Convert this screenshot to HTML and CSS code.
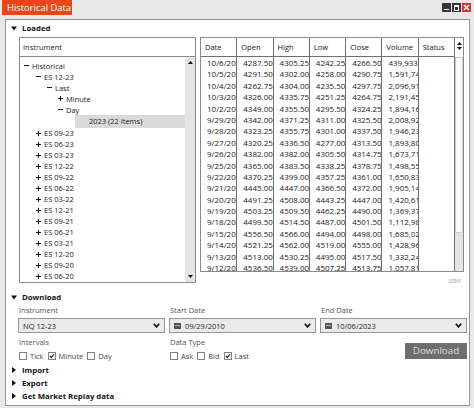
FILE: index.html
```html
<!DOCTYPE html>
<html>
<head>
<meta charset="utf-8">
<link rel="stylesheet" href="styles.css">
</head>
<body>

<div class="titleBar">
  <div class="titleTab">Historical Data</div>
  <div class="winButtons">
    <span class="winBtn minBtn"><span class="minBar"></span></span>
    <span class="winBtn maxBtn"><span class="maxBox"></span></span>
    <span class="winBtn closeBtn">
      <svg width="9" height="9" viewBox="0 0 9 9"><path d="M2 2 L7 7 M7 2 L2 7" stroke="#fff" stroke-width="1.6"/></svg>
    </span>
  </div>
</div>

<div class="panel">

  <div class="sectionHead">
    <svg class="arrowDown" width="6" height="5" viewBox="0 0 6 5"><polygon points="0,0.5 6,0.5 3,4.5" fill="#111"/></svg>
    Loaded
  </div>

  <div class="loadedBody">

    <div class="instrumentBox">
      <div class="boxHeader">Instrument</div>
      <div class="treeArea">
        <div class="tree">
          <div class="treeRow" style="padding-left:4px"><span class="exp minus"></span>Historical</div>
          <div class="treeRow" style="padding-left:16px"><span class="exp minus"></span>ES 12-23</div>
          <div class="treeRow" style="padding-left:27px"><span class="exp minus"></span>Last</div>
          <div class="treeRow" style="padding-left:38px"><span class="exp plus"></span>Minute</div>
          <div class="treeRow" style="padding-left:38px"><span class="exp minus"></span>Day</div>
          <div class="treeRow selRow">2023 (22 items)</div>
          <div class="treeRow" style="padding-left:16px"><span class="exp plus"></span>ES 09-23</div>
          <div class="treeRow" style="padding-left:16px"><span class="exp plus"></span>ES 06-23</div>
          <div class="treeRow" style="padding-left:16px"><span class="exp plus"></span>ES 03-23</div>
          <div class="treeRow" style="padding-left:16px"><span class="exp plus"></span>ES 12-22</div>
          <div class="treeRow" style="padding-left:16px"><span class="exp plus"></span>ES 09-22</div>
          <div class="treeRow" style="padding-left:16px"><span class="exp plus"></span>ES 06-22</div>
          <div class="treeRow" style="padding-left:16px"><span class="exp plus"></span>ES 03-22</div>
          <div class="treeRow" style="padding-left:16px"><span class="exp plus"></span>ES 12-21</div>
          <div class="treeRow" style="padding-left:16px"><span class="exp plus"></span>ES 09-21</div>
          <div class="treeRow" style="padding-left:16px"><span class="exp plus"></span>ES 06-21</div>
          <div class="treeRow" style="padding-left:16px"><span class="exp plus"></span>ES 03-21</div>
          <div class="treeRow" style="padding-left:16px"><span class="exp plus"></span>ES 12-20</div>
          <div class="treeRow" style="padding-left:16px"><span class="exp plus"></span>ES 09-20</div>
          <div class="treeRow" style="padding-left:16px"><span class="exp plus"></span>ES 06-20</div>
        </div>
        <div class="treeScroll">
          <svg width="5" height="3" viewBox="0 0 5 3"><polygon points="0,3 5,3 2.5,0" fill="#111"/></svg>
          <div class="treeThumb"></div>
          <svg width="5" height="3" viewBox="0 0 5 3"><polygon points="0,0 5,0 2.5,3" fill="#111"/></svg>
        </div>
      </div>
    </div>

    <div class="gridWrap">
      <div class="grid">
        <div class="gridMain">
          <div class="gridHead">
            <div class="hcell">Date</div>
            <div class="hcell">Open</div>
            <div class="hcell">High</div>
            <div class="hcell">Low</div>
            <div class="hcell">Close</div>
            <div class="hcell">Volume</div>
            <div class="hcell">Status</div>
          </div>
          <div class="gridBody">
            <div class="gridRow"><div class="cell">10/6/2023</div><div class="cell">4287.50</div><div class="cell">4305.25</div><div class="cell">4242.25</div><div class="cell">4266.50</div><div class="cell">439,933</div><div class="cell"></div></div>
            <div class="gridRow"><div class="cell">10/5/2023</div><div class="cell">4291.50</div><div class="cell">4302.00</div><div class="cell">4258.00</div><div class="cell">4290.75</div><div class="cell">1,591,742</div><div class="cell"></div></div>
            <div class="gridRow"><div class="cell">10/4/2023</div><div class="cell">4262.75</div><div class="cell">4304.00</div><div class="cell">4235.50</div><div class="cell">4297.75</div><div class="cell">2,096,918</div><div class="cell"></div></div>
            <div class="gridRow"><div class="cell">10/3/2023</div><div class="cell">4326.00</div><div class="cell">4335.75</div><div class="cell">4251.25</div><div class="cell">4264.75</div><div class="cell">2,191,455</div><div class="cell"></div></div>
            <div class="gridRow"><div class="cell">10/2/2023</div><div class="cell">4349.00</div><div class="cell">4355.50</div><div class="cell">4295.50</div><div class="cell">4324.25</div><div class="cell">1,894,163</div><div class="cell"></div></div>
            <div class="gridRow"><div class="cell">9/29/2023</div><div class="cell">4342.00</div><div class="cell">4371.25</div><div class="cell">4311.00</div><div class="cell">4325.50</div><div class="cell">2,008,926</div><div class="cell"></div></div>
            <div class="gridRow"><div class="cell">9/28/2023</div><div class="cell">4323.25</div><div class="cell">4355.75</div><div class="cell">4301.00</div><div class="cell">4337.50</div><div class="cell">1,946,231</div><div class="cell"></div></div>
            <div class="gridRow"><div class="cell">9/27/2023</div><div class="cell">4320.25</div><div class="cell">4336.50</div><div class="cell">4277.00</div><div class="cell">4313.50</div><div class="cell">1,893,804</div><div class="cell"></div></div>
            <div class="gridRow"><div class="cell">9/26/2023</div><div class="cell">4382.00</div><div class="cell">4382.00</div><div class="cell">4305.50</div><div class="cell">4314.75</div><div class="cell">1,673,719</div><div class="cell"></div></div>
            <div class="gridRow"><div class="cell">9/25/2023</div><div class="cell">4365.00</div><div class="cell">4383.50</div><div class="cell">4338.25</div><div class="cell">4378.75</div><div class="cell">1,498,556</div><div class="cell"></div></div>
            <div class="gridRow"><div class="cell">9/22/2023</div><div class="cell">4370.25</div><div class="cell">4399.00</div><div class="cell">4357.25</div><div class="cell">4361.00</div><div class="cell">1,650,837</div><div class="cell"></div></div>
            <div class="gridRow"><div class="cell">9/21/2023</div><div class="cell">4445.00</div><div class="cell">4447.00</div><div class="cell">4366.50</div><div class="cell">4372.00</div><div class="cell">1,905,142</div><div class="cell"></div></div>
            <div class="gridRow"><div class="cell">9/20/2023</div><div class="cell">4491.25</div><div class="cell">4508.00</div><div class="cell">4443.25</div><div class="cell">4447.00</div><div class="cell">1,420,618</div><div class="cell"></div></div>
            <div class="gridRow"><div class="cell">9/19/2023</div><div class="cell">4503.25</div><div class="cell">4509.50</div><div class="cell">4462.25</div><div class="cell">4490.00</div><div class="cell">1,369,375</div><div class="cell"></div></div>
            <div class="gridRow"><div class="cell">9/18/2023</div><div class="cell">4499.50</div><div class="cell">4514.50</div><div class="cell">4487.00</div><div class="cell">4501.50</div><div class="cell">1,112,983</div><div class="cell"></div></div>
            <div class="gridRow"><div class="cell">9/15/2023</div><div class="cell">4556.50</div><div class="cell">4566.00</div><div class="cell">4494.00</div><div class="cell">4498.00</div><div class="cell">1,685,027</div><div class="cell"></div></div>
            <div class="gridRow"><div class="cell">9/14/2023</div><div class="cell">4521.25</div><div class="cell">4562.00</div><div class="cell">4519.00</div><div class="cell">4555.00</div><div class="cell">1,428,961</div><div class="cell"></div></div>
            <div class="gridRow"><div class="cell">9/13/2023</div><div class="cell">4513.00</div><div class="cell">4530.25</div><div class="cell">4495.00</div><div class="cell">4517.50</div><div class="cell">1,332,249</div><div class="cell"></div></div>
            <div class="gridRow"><div class="cell">9/12/2023</div><div class="cell">4536.50</div><div class="cell">4539.00</div><div class="cell">4507.25</div><div class="cell">4513.75</div><div class="cell">1,057,812</div><div class="cell"></div></div>
          </div>
        </div>
        <div class="gridScroll">
          <div class="sortArrows">
            <svg width="5" height="3" viewBox="0 0 5 3"><polygon points="0,3 5,3 2.5,0" fill="#111"/></svg>
            <svg width="5" height="3" viewBox="0 0 5 3"><polygon points="0,0 5,0 2.5,3" fill="#111"/></svg>
          </div>
          <div class="gridThumb"></div>
        </div>
      </div>
      <div class="saveLink">save</div>
    </div>

  </div>

  <div class="sectionHead downloadHead">
    <svg class="arrowDown" width="6" height="5" viewBox="0 0 6 5"><polygon points="0,0.5 6,0.5 3,4.5" fill="#111"/></svg>
    Download
  </div>

  <div class="downloadForm">
    <div class="label">Instrument</div>
    <div class="label">Start Date</div>
    <div class="label">End Date</div>

    <div class="combo">
      <span class="comboText">NQ 12-23</span>
      <svg class="chevron" width="7" height="5" viewBox="0 0 7 5"><polyline points="0.8,0.8 3.5,3.8 6.2,0.8" fill="none" stroke="#111" stroke-width="1.7"/></svg>
    </div>
    <div class="combo">
      <svg class="calIcon" width="7" height="6" viewBox="0 0 7 6"><rect x="0" y="0" width="7" height="6" fill="#555"/><rect x="1" y="2" width="5" height="0.8" fill="#ccc"/></svg>
      <span class="comboText">09/29/2010</span>
      <svg class="chevron" width="7" height="5" viewBox="0 0 7 5"><polyline points="0.8,0.8 3.5,3.8 6.2,0.8" fill="none" stroke="#111" stroke-width="1.7"/></svg>
    </div>
    <div class="combo">
      <svg class="calIcon" width="7" height="6" viewBox="0 0 7 6"><rect x="0" y="0" width="7" height="6" fill="#555"/><rect x="1" y="2" width="5" height="0.8" fill="#ccc"/></svg>
      <span class="comboText">10/06/2023</span>
      <svg class="chevron" width="7" height="5" viewBox="0 0 7 5"><polyline points="0.8,0.8 3.5,3.8 6.2,0.8" fill="none" stroke="#111" stroke-width="1.7"/></svg>
    </div>

    <div class="label spaced">Intervals</div>
    <div class="label spaced">Data Type</div>
    <div class="buttonCell"><div class="downloadBtn">Download</div></div>

    <div class="checkRow">
      <span class="checkBox"></span><span class="checkLabel">Tick</span>
      <span class="checkBox"><svg width="6" height="6" viewBox="0 0 6 6"><polyline points="0.8,3 2.3,4.6 5.2,1" fill="none" stroke="#222" stroke-width="1.1"/></svg></span><span class="checkLabel">Minute</span>
      <span class="checkBox"></span><span class="checkLabel">Day</span>
    </div>
    <div class="checkRow">
      <span class="checkBox"></span><span class="checkLabel">Ask</span>
      <span class="checkBox"></span><span class="checkLabel">Bid</span>
      <span class="checkBox"><svg width="6" height="6" viewBox="0 0 6 6"><polyline points="0.8,3 2.3,4.6 5.2,1" fill="none" stroke="#222" stroke-width="1.1"/></svg></span><span class="checkLabel">Last</span>
    </div>
  </div>

  <div class="sectionHead collapsed">
    <svg class="arrowRight" width="4" height="6" viewBox="0 0 4 6"><polygon points="0,0 4,3 0,6" fill="#111"/></svg>
    Import
  </div>
  <div class="sectionHead collapsed">
    <svg class="arrowRight" width="4" height="6" viewBox="0 0 4 6"><polygon points="0,0 4,3 0,6" fill="#111"/></svg>
    Export
  </div>
  <div class="sectionHead collapsed">
    <svg class="arrowRight" width="4" height="6" viewBox="0 0 4 6"><polygon points="0,0 4,3 0,6" fill="#111"/></svg>
    Get Market Replay data
  </div>

</div>

</body>
</html>
```

FILE: styles.css
```css
body {
  margin: 0;
  width: 474px;
  height: 408px;
  overflow: hidden;
  background-color: rgb(232, 232, 232);
  font-family: "Open Sans", "Noto Sans", sans-serif;
  font-size: 7.5px;
  color: rgb(34, 34, 34);
}

/* title bar */

.titleBar {
  display: flex;
  justify-content: space-between;
  height: 19px;
}

.titleTab {
  margin-left: 2px;
  width: 65px;
  height: 15px;
  padding-left: 5px;
  background-color: rgb(230, 70, 25);
  color: white;
  font-size: 9.4px;
  line-height: 15px;
}

.winButtons {
  display: flex;
  gap: 1px;
  padding-top: 3px;
  padding-right: 3px;
}

.winBtn {
  position: relative;
  width: 9px;
  height: 9px;
  background-color: rgb(52, 52, 52);
}

.minBar {
  position: absolute;
  left: 2px;
  bottom: 2px;
  width: 5px;
  height: 1px;
  background: white;
}

.maxBox {
  position: absolute;
  left: 2px;
  top: 2px;
  width: 3px;
  height: 3px;
  border: 1px solid white;
  border-top-width: 2px;
}

.closeBtn {
  background-color: rgb(214, 48, 40);
}

.closeBtn svg {
  display: block;
}

/* main panel */

.panel {
  margin: 0 4px 0 5px;
  height: 385px;
  border: 1px solid rgb(150, 150, 150);
  background: white;
}

.sectionHead {
  display: flex;
  align-items: center;
  height: 14px;
  margin-top: 1px;
  padding-left: 5px;
  font-weight: bold;
  font-size: 7.8px;
  color: rgb(20, 20, 20);
}

.arrowDown {
  margin-right: 5px;
}

.arrowRight {
  margin-left: 1px;
  margin-right: 6px;
}

.collapsed {
  height: 13px;
  margin-top: 0;
}

.downloadHead {
  margin-top: 7px;
}

.loadedBody {
  display: flex;
  gap: 4px;
  height: 246px;
  margin-top: 2px;
  margin-left: 13px;
}

/* instrument tree */

.instrumentBox {
  display: flex;
  flex-direction: column;
  width: 177px;
  box-sizing: border-box;
  border: 1px solid rgb(138, 138, 138);
}

.boxHeader {
  height: 18px;
  line-height: 18px;
  padding-left: 3px;
  border-bottom: 1px solid rgb(138, 138, 138);
}

.treeArea {
  display: flex;
  flex: 1;
  overflow: hidden;
}

.tree {
  flex: 1;
  padding-top: 3px;
  overflow: hidden;
}

.treeRow {
  display: flex;
  align-items: center;
  height: 11px;
  white-space: nowrap;
}

.exp {
  position: relative;
  width: 8px;
  height: 5px;
  flex-shrink: 0;
}

.exp::before {
  content: "";
  position: absolute;
  left: 0;
  top: 2px;
  width: 5px;
  height: 1.3px;
  background: rgb(20, 20, 20);
}

.plus::after {
  content: "";
  position: absolute;
  left: 1.9px;
  top: 0;
  width: 1.3px;
  height: 5px;
  background: rgb(20, 20, 20);
}

.selRow {
  height: 12.5px;
  margin-left: 55px;
  padding-left: 14px;
  background-color: rgb(218, 218, 218);
}

.treeScroll {
  display: flex;
  flex-direction: column;
  align-items: center;
  justify-content: space-between;
  width: 10px;
  padding: 4px 0;
  box-sizing: border-box;
  background-color: rgb(228, 228, 228);
}

.treeThumb {
  flex: 1;
}

/* data grid */

.gridWrap {
  display: flex;
  flex-direction: column;
  width: 264px;
}

.grid {
  display: flex;
  height: 235px;
  box-sizing: border-box;
  border: 1px solid rgb(138, 138, 138);
}

.gridMain {
  display: flex;
  flex-direction: column;
  width: 254px;
}

.gridHead {
  display: flex;
  height: 18px;
  border-bottom: 1px solid rgb(110, 110, 110);
}

.hcell {
  width: 36.3px;
  box-sizing: border-box;
  padding-left: 4px;
  line-height: 18px;
  border-right: 1px solid rgb(110, 110, 110);
}

.gridBody {
  flex: 1;
  overflow: hidden;
}

.gridRow {
  display: flex;
  height: 11.4px;
}

.cell {
  width: 36.3px;
  box-sizing: border-box;
  padding-left: 6px;
  font-size: 8px;
  line-height: 11.4px;
  white-space: nowrap;
  overflow: hidden;
  border-right: 1px solid rgb(110, 110, 110);
}

.gridScroll {
  display: flex;
  flex-direction: column;
  width: 8px;
  background-color: rgb(228, 228, 228);
}

.sortArrows {
  display: flex;
  flex-direction: column;
  align-items: center;
  gap: 2px;
  height: 19px;
  padding-top: 4px;
  box-sizing: border-box;
  background: white;
}

.gridThumb {
  height: 176px;
  box-sizing: border-box;
  border: 1px solid rgb(205, 205, 205);
  background: rgb(250, 250, 250);
}

.saveLink {
  margin-top: 4px;
  padding-right: 3px;
  text-align: right;
  font-style: italic;
  font-size: 6.5px;
  color: rgb(170, 170, 170);
}

/* download form */

.downloadForm {
  display: grid;
  grid-template-columns: 147px 147px 147px;
  column-gap: 4px;
  margin-left: 12px;
}

.label {
  height: 12px;
  line-height: 12px;
  padding-left: 1px;
  color: rgb(85, 85, 85);
}

.spaced {
  margin-top: 3px;
}

.combo {
  display: flex;
  align-items: center;
  height: 15px;
  margin-top: 2px;
  padding: 0 4px;
  box-sizing: border-box;
  border: 1px solid rgb(150, 150, 150);
  background-color: rgb(234, 234, 234);
}

.comboText {
  flex: 1;
  color: rgb(40, 40, 40);
}

.calIcon {
  margin-right: 4px;
}

.buttonCell {
  grid-row: span 2;
  display: flex;
  justify-content: flex-end;
  align-items: flex-start;
}

.downloadBtn {
  width: 62px;
  height: 16px;
  margin-top: 10px;
  line-height: 16px;
  text-align: center;
  background-color: rgb(110, 110, 110);
  color: rgb(220, 220, 220);
  font-size: 9.8px;
}

.checkRow {
  display: flex;
  align-items: center;
  height: 15px;
  padding-left: 1px;
}

.checkBox {
  display: flex;
  align-items: center;
  justify-content: center;
  width: 8px;
  height: 8px;
  box-sizing: border-box;
  border: 1px solid rgb(130, 130, 130);
  background: white;
}

.checkLabel {
  margin-left: 3px;
  margin-right: 4px;
  color: rgb(70, 70, 70);
}
```
